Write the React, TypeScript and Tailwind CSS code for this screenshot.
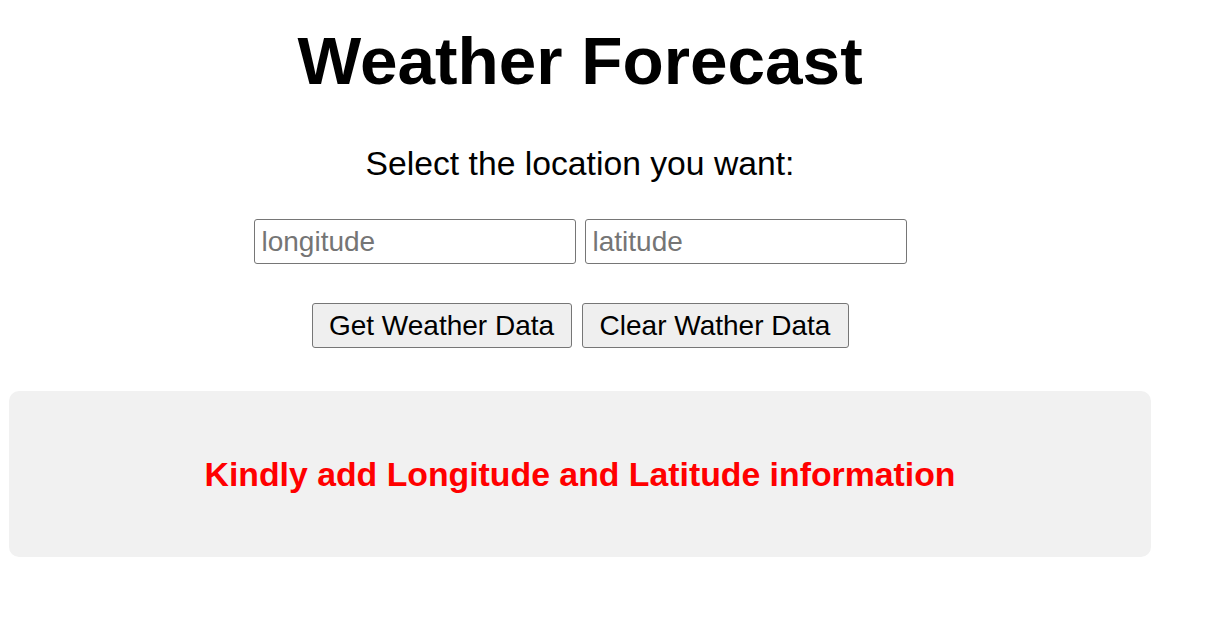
import React, { useState } from 'react';

export default function App() {
    const [lon, setLon] = useState('');
    const [lat, setLat] = useState('');

    return (
        <div className="w-[1142px] ml-[9px] flex flex-col items-center text-black font-['Liberation_Sans',Arial,sans-serif]">
            <h1 className="mt-[27px] text-[67.5px] leading-none font-bold">Weather Forecast</h1>

            <p className="mt-[52px] text-[33.7px] leading-none">Select the location you want:</p>

            {/* Coordinates */}
            <div className="mt-[39px] flex gap-[9px]">
                <input
                    value={lon}
                    onChange={e => setLon(e.target.value)}
                    placeholder="longitude"
                    className="w-[322px] h-[45px] px-[7px] text-[28px] border border-[#767676] rounded-[3px] placeholder:text-[#757575] outline-none"
                />
                <input
                    value={lat}
                    onChange={e => setLat(e.target.value)}
                    placeholder="latitude"
                    className="w-[322px] h-[45px] px-[7px] text-[28px] border border-[#767676] rounded-[3px] placeholder:text-[#757575] outline-none"
                />
            </div>

            <div className="mt-[39px] flex gap-[10px]">
                <button className="w-[260px] h-[45px] text-[28px] bg-[#efefef] border border-[#767676] rounded-[3px]">
                    Get Weather Data
                </button>
                <button
                    onClick={() => { setLon(''); setLat(''); }}
                    className="w-[267px] h-[45px] text-[28px] bg-[#efefef] border border-[#767676] rounded-[3px]"
                >
                    Clear Wather Data
                </button>
            </div>

            {/* Result panel */}
            <div className="mt-[43px] w-full h-[166px] rounded-[10px] bg-[#f1f1f1] flex items-center justify-center">
                <p className="pt-[1px] text-[33.8px] leading-none font-bold text-[#ff0000]">
                    Kindly add Longitude and Latitude information
                </p>
            </div>
        </div>
    );
}
